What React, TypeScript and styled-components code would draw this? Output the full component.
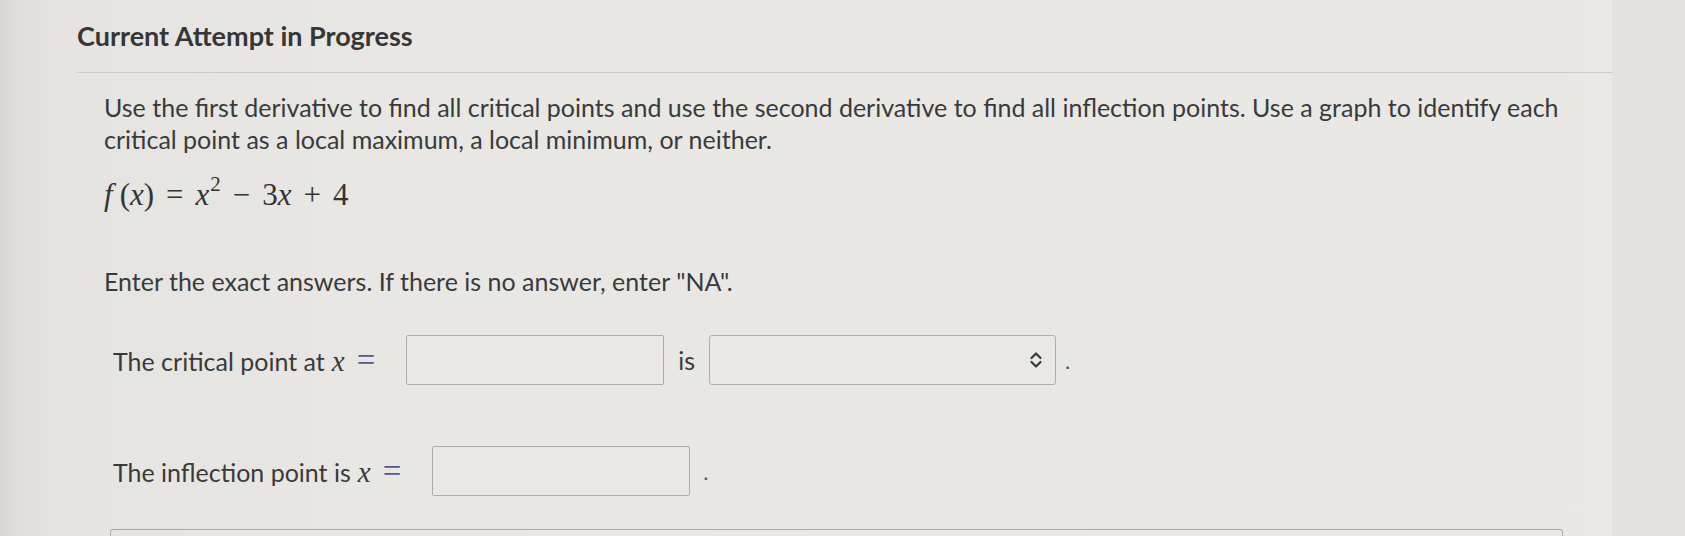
import React from "react";
import styled, { createGlobalStyle } from "styled-components";

const GlobalStyle = createGlobalStyle`
  html, body {
    margin: 0;
    padding: 0;
    background: #e2e1dd;
  }
  body {
    font-family: Lato, "Open Sans", "Liberation Sans", sans-serif;
    color: #3a3a3a;
    overflow: hidden;
  }
`;

const Page = styled.div`
  display: flex;
  width: 1685px;
  height: 536px;
  overflow: hidden;
`;

const Main = styled.main`
  flex: 0 0 1612px;
  background: linear-gradient(
    to right,
    #d6d5d1 0px,
    #dfdeda 14px,
    #e5e4e0 60px,
    #e8e7e3 400px,
    #e9e8e4 100%
  );
  padding-left: 77px;
  box-sizing: border-box;
`;

const SideStrip = styled.aside`
  flex: 1;
  background: #e3e2de;
`;

const Header = styled.header`
  padding-top: 16px;
  padding-bottom: 16px;
`;

const Title = styled.h1`
  margin: 0;
  font-family: Lato, "Open Sans", sans-serif;
  font-weight: 700;
  font-size: 27px;
  line-height: 40px;
  color: #363636;
`;

const Divider = styled.hr`
  margin: 0;
  border: none;
  border-top: 1px solid #cdccc8;
`;

const Question = styled.section`
  padding-left: 27px;
  padding-top: 18px;
`;

const Prompt = styled.p`
  margin: 0;
  font-size: 25px;
  line-height: 32px;
  color: #3a3a3a;
  max-width: 1480px;
`;

const Formula = styled.div`
  margin-top: 23px;
  font-family: "Liberation Serif", "Times New Roman", serif;
  font-size: 31px;
  line-height: 34px;
  color: #333333;
  white-space: nowrap;
`;

const MathVar = styled.i`
  font-family: "Liberation Serif", "Times New Roman", serif;
  font-style: italic;
`;

const Op = styled.span`
  font-family: "Liberation Serif", "Times New Roman", serif;
  font-style: normal;
  margin: 0 12px;
`;

const Paren = styled.span`
  margin-left: 7px;
`;

const Sup = styled.sup`
  font-size: 21px;
  line-height: 0;
  vertical-align: 14px;
  margin-left: 1px;
`;

const Instruction = styled.p`
  margin: 53px 0 0 0;
  font-size: 25px;
  line-height: 32px;
  color: #3a3a3a;
`;

const AnswerList = styled.div`
  display: flex;
  flex-direction: column;
  gap: 61px;
  margin-top: 38px;
  padding-left: 9px;
`;

const AnswerRow = styled.div`
  display: flex;
  align-items: center;
  height: 50px;
  font-size: 25px;
  color: #3a3a3a;
  white-space: nowrap;
`;

const Label = styled.span`
  margin-right: 31px;
`;

const LabelVar = styled.i`
  font-family: "Liberation Serif", "Times New Roman", serif;
  font-style: italic;
  font-size: 29px;
  margin-left: 7px;
`;

const LabelEq = styled.span`
  font-family: "Liberation Serif", "Times New Roman", serif;
  font-size: 33px;
  margin-left: 12px;
  color: #55598f;
`;

const TextBox = styled.input`
  box-sizing: border-box;
  width: 258px;
  height: 50px;
  border: 1px solid #aeada9;
  border-radius: 2px;
  background: #e9e8e4;
  font-family: inherit;
  font-size: 20px;
  padding: 0 10px;
  outline: none;
`;

const Word = styled.span`
  margin: 0 14px;
`;

const SelectBox = styled.div`
  box-sizing: border-box;
  width: 347px;
  height: 50px;
  border: 1px solid #aeada9;
  border-radius: 3px;
  background: #e9e8e4;
  display: flex;
  align-items: center;
  justify-content: flex-end;
  padding-right: 12px;
`;

const Period = styled.span<{ $gap: number }>`
  margin-left: ${(p) => p.$gap}px;
  font-size: 22px;
  color: #555;
`;

const FooterBox = styled.div`
  margin-top: 33px;
  margin-left: 6px;
  width: 1451px;
  height: 60px;
  border: 1px solid #a9a8a4;
  border-bottom: none;
  border-radius: 3px 3px 0 0;
`;

const Chevrons = () => (
  <svg width="14" height="18" viewBox="0 0 14 18" fill="none">
    <path d="M2.5 7 L7 2.5 L11.5 7" stroke="#3a3a3a" strokeWidth="2.2" strokeLinecap="round" strokeLinejoin="round" />
    <path d="M2.5 11 L7 15.5 L11.5 11" stroke="#3a3a3a" strokeWidth="2.2" strokeLinecap="round" strokeLinejoin="round" />
  </svg>
);

const EqX = () => (
  <>
    <LabelVar>x</LabelVar>
    <LabelEq>=</LabelEq>
  </>
);

export default function App() {
  return (
    <>
      <GlobalStyle />
      <Page>
        <Main>
          <Header>
            <Title>Current Attempt in Progress</Title>
          </Header>
          <Divider />
          <Question>
            <Prompt>
              Use the first derivative to find all critical points and use the second derivative to find all
              inflection points. Use a graph to identify each critical point as a local maximum, a local
              minimum, or neither.
            </Prompt>
            <Formula>
              <MathVar>f</MathVar>
              <Paren>(</Paren>
              <MathVar>x</MathVar>)<Op>=</Op>
              <MathVar>x</MathVar>
              <Sup>2</Sup>
              <Op>−</Op>3<MathVar>x</MathVar>
              <Op>+</Op>4
            </Formula>
            <Instruction>Enter the exact answers. If there is no answer, enter "NA".</Instruction>
            <AnswerList>
              <AnswerRow>
                <Label>
                  The critical point at
                  <EqX />
                </Label>
                <TextBox aria-label="critical point" />
                <Word>is</Word>
                <SelectBox>
                  <Chevrons />
                </SelectBox>
                <Period $gap={9}>.</Period>
              </AnswerRow>
              <AnswerRow>
                <Label>
                  The inflection point is
                  <EqX />
                </Label>
                <TextBox aria-label="inflection point" />
                <Period $gap={13}>.</Period>
              </AnswerRow>
            </AnswerList>
            <FooterBox />
          </Question>
        </Main>
        <SideStrip />
      </Page>
    </>
  );
}
